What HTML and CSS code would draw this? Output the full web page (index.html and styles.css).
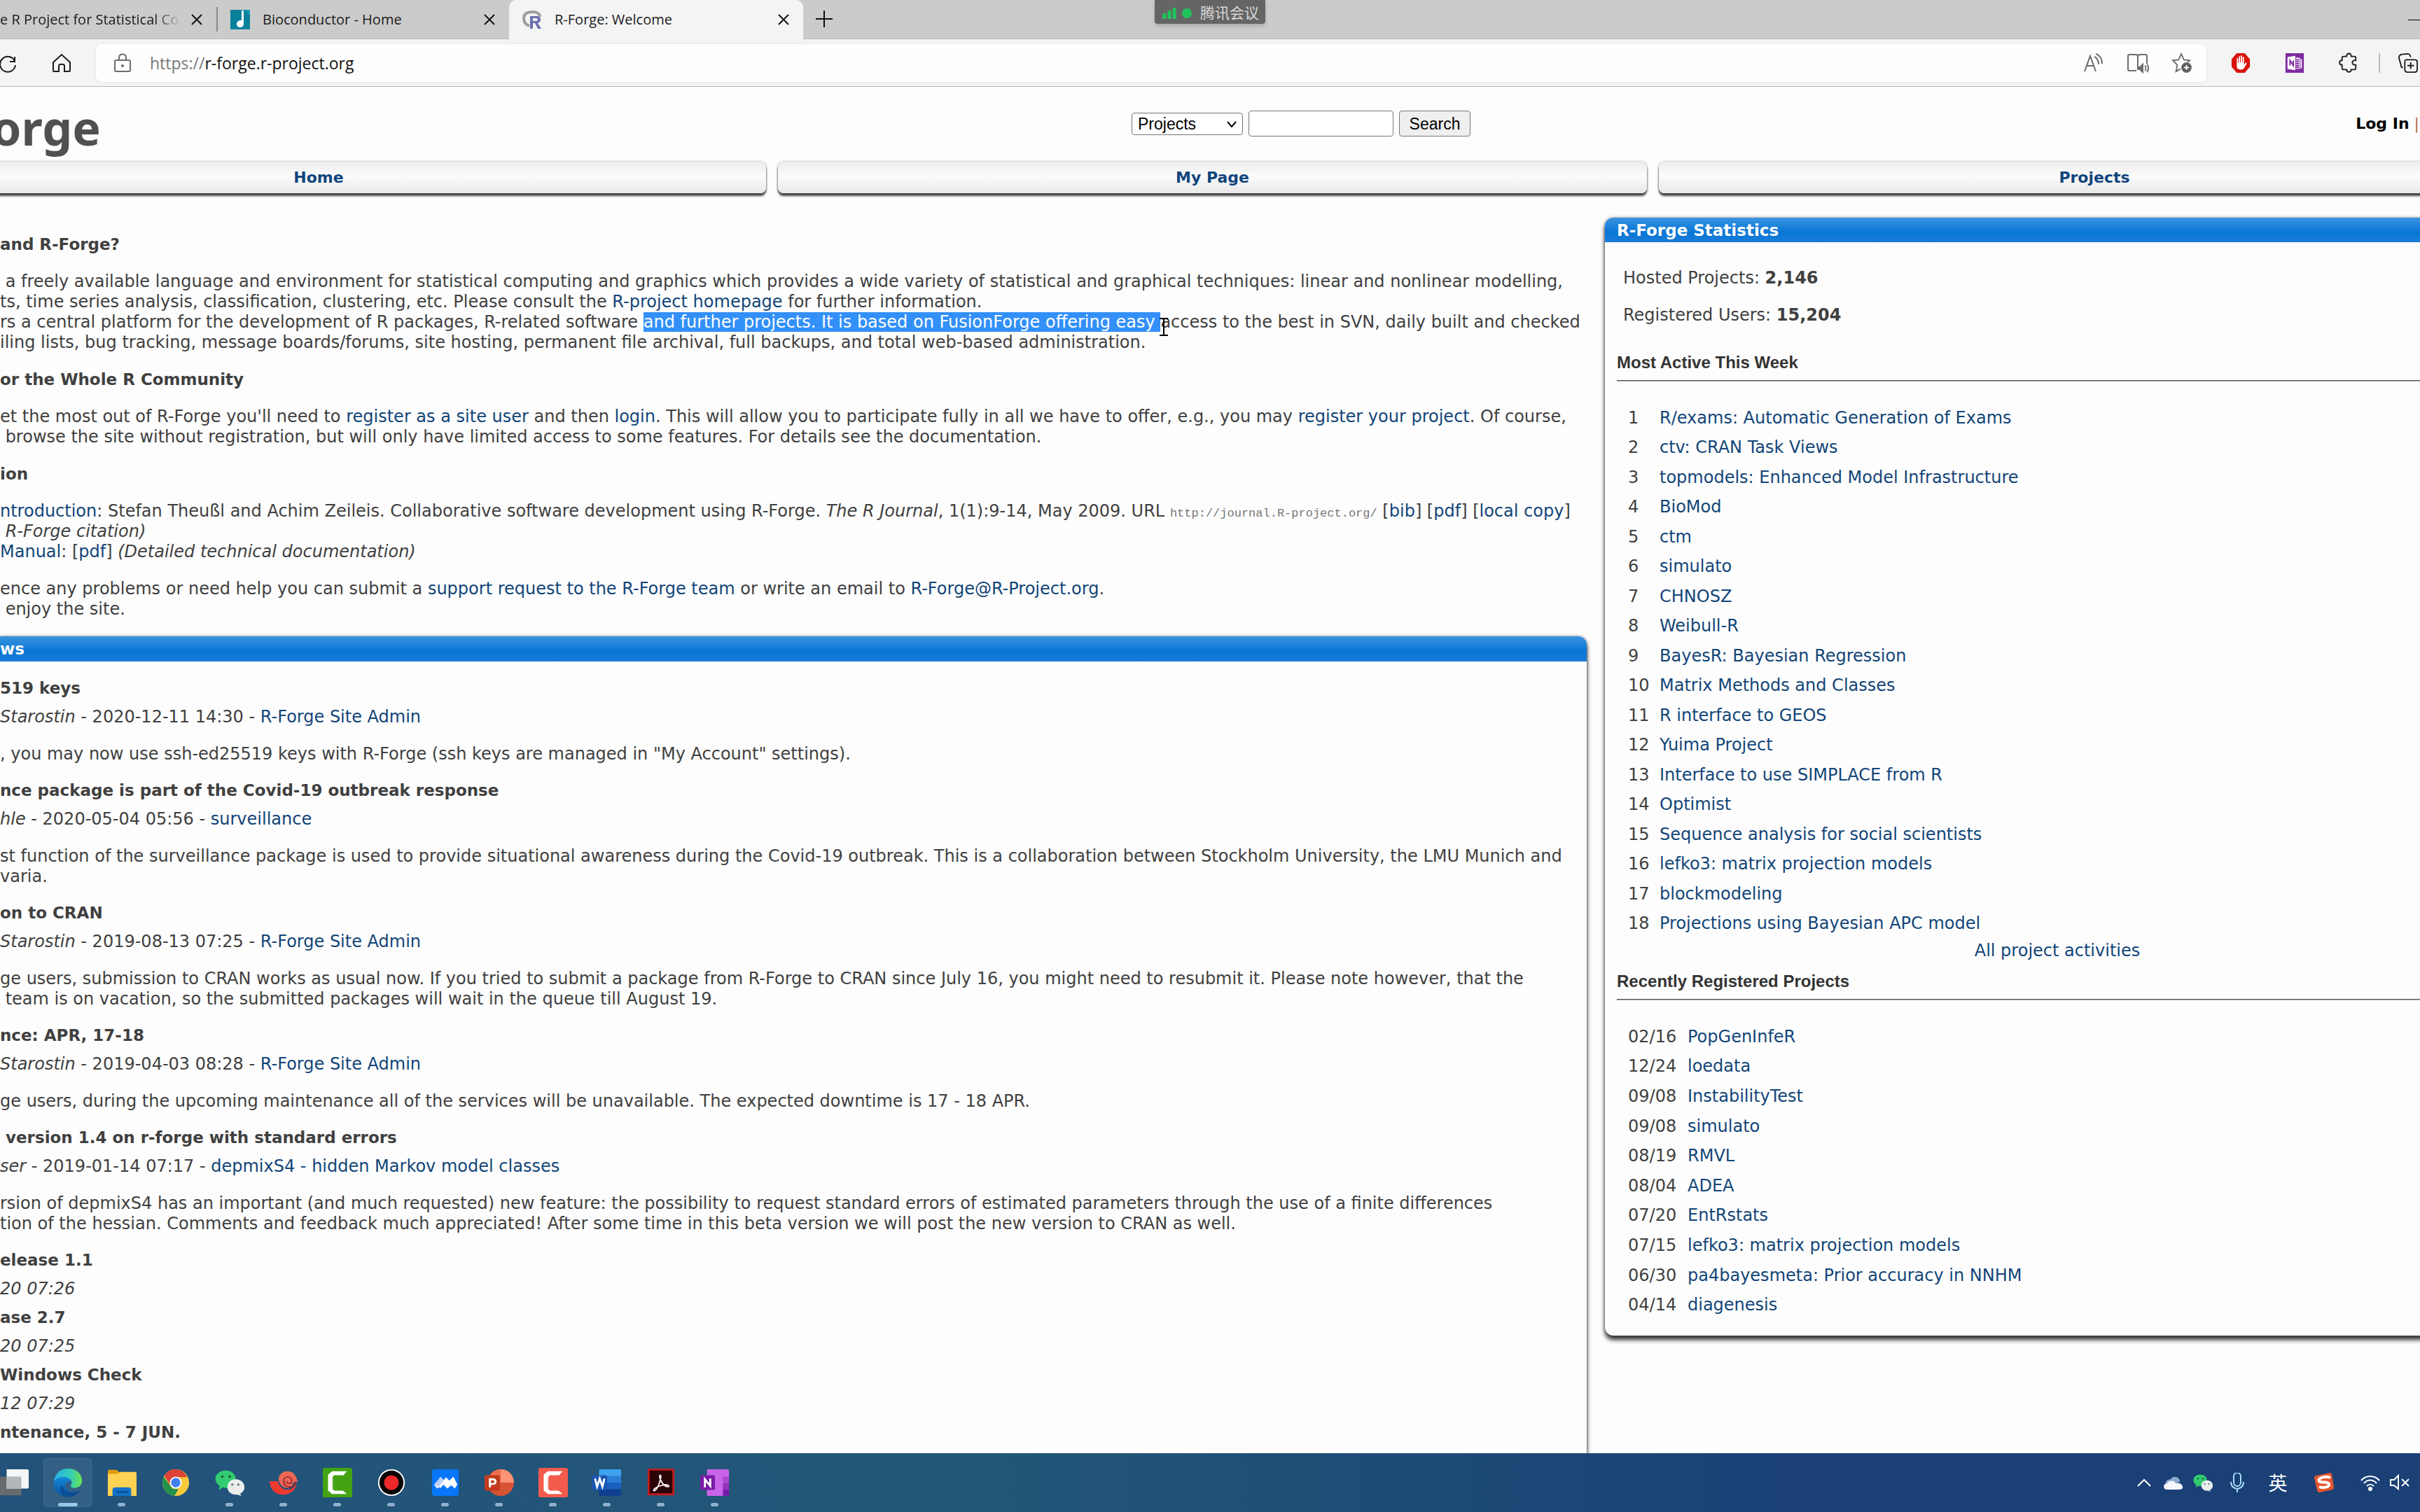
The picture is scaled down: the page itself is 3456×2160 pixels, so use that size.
FILE: index.html
```html
<!DOCTYPE html>
<html lang="en">
<head>
<meta charset="utf-8">
<title>R-Forge: Welcome</title>
<link rel="stylesheet" href="styles.css">
</head>
<body>
<header class="browser">
  <div class="tabs">
    <div class="tab tab-first">
      <span class="tab-title fade">e R Project for Statistical Co</span>
      <button class="close" aria-label="Close tab"><svg viewBox="0 0 16 16"><path d="M1 1l14 14M15 1L1 15"/></svg></button>
    </div>
    <div class="tab tab-second">
      <svg class="favicon" viewBox="0 0 28 28"><path fill="#0a819b" d="M0 0h28v28H0z"/><path fill="#0e97ae" d="M20 0h8v8z"/><path fill="#fff" d="M16 1h3v19c0 3-2 5-5 5s-5-2-5-5 3-5 7-5z"/></svg>
      <span class="tab-title">Bioconductor - Home</span>
      <button class="close" aria-label="Close tab"><svg viewBox="0 0 16 16"><path d="M1 1l14 14M15 1L1 15"/></svg></button>
    </div>
    <div class="tab tab-active">
      <svg class="favicon" viewBox="0 0 28 28"><path fill="none" stroke="#9b9da0" stroke-width="4" d="M10 23C4 21 2 16 2 12 2 6 7 3 14 3s11 3 11 7"/><path fill="#6d6fae" fill-rule="evenodd" d="M11 9h9c4 0 6 2 6 5 0 2-1 4-4 5l5 8h-5l-4-8h-3v8h-4zm4 3v4h4c4 0 4-4 0-4z"/></svg>
      <span class="tab-title">R-Forge: Welcome</span>
      <button class="close" aria-label="Close tab"><svg viewBox="0 0 16 16"><path d="M1 1l14 14M15 1L1 15"/></svg></button>
    </div>
    <button class="new-tab" aria-label="New tab"><svg viewBox="0 0 24 24"><path d="M12 0v24M0 12h24"/></svg></button>
    <button class="minimise" aria-label="Minimize"></button>
  </div>
  <div class="toolbar">
    <button class="tool refresh" aria-label="Refresh"><svg viewBox="0 0 28 28"><path d="M24 5v7h-7M24 11a11 11 0 1 0 1 6"/></svg></button>
    <button class="tool home" aria-label="Home page"><svg viewBox="0 0 28 28"><path d="M2 13L14 2l12 11v12c0 1-1 1-1 1h-7v-8c0-3-8-3-8 0v8H3c-1 0-1-1-1-1z"/></svg></button>
    <div class="address">
      <svg class="lock" viewBox="0 0 28 28"><path d="M5 10h18c2 0 2 1 2 2v12c0 2-1 2-2 2H5c-2 0-2-1-2-2V12c0-1 0-2 2-2zM9 10V6c0-6 10-6 10 0v4"/><circle cx="14" cy="18" r="1"/></svg>
      <span class="url"><span class="scheme">https://</span>r-forge.r-project.org</span>
      <button class="tool soft" aria-label="Read aloud"><svg viewBox="0 0 28 28"><path d="M1 26L9 4l8 22M4 18h10M15 5c3 1 6 5 6 11M17 1c6 2 9 7 9 14"/></svg></button>
      <button class="tool soft" aria-label="Immersive reader"><svg viewBox="0 0 28 28"><path d="M14 20V5c0-2-1-3-3-3H2C1 2 0 2 0 4v19c0 2 1 2 2 2h10M14 5c0-2 1-3 3-3h8c2 0 2 1 2 2v11M24 18c2 2 2 5 0 7M27 16c3 3 3 8 0 11"/><path fill="#6c6c6c" d="M14 20h3l4-4v11l-4-4h-3z"/></svg></button>
      <button class="tool soft" aria-label="Add to favorites"><svg viewBox="0 0 30 30"><path d="M13 24l-7 4 2-10-7-7 9-1 4-9 4 9 9 1-3 3"/><circle cx="22" cy="22" r="7" fill="#555"/><path stroke="#fff" d="M22 18v8M18 22h8"/></svg></button>
    </div>
    <button class="tool" aria-label="Ad blocker"><svg class="flat" viewBox="0 0 28 30"><path fill="#d8140c" d="M8 0h12l8 9v12l-8 9H8l-8-9V9z"/><path fill="#fff" d="M8 9c0-2 2-2 2 0v6h1V6c0-2 2-2 2 0v8h1V5c0-2 2-2 2 0v9h1V7c0-2 2-2 2 0v11l2-3c2-1 2 0 2 1l-4 7c-2 3-9 3-11-1z"/></svg></button>
    <button class="tool" aria-label="OneNote clipper"><svg class="flat" viewBox="0 0 28 30"><path fill="#7d2aa0" d="M0 0h28v30H0z"/><path fill="#fff" d="M3 6l12-2v22L3 24zM16 7h6v17h-6z"/><path stroke="#7d2aa0" fill="none" d="M16 10h5M16 13h5M16 16h5M16 19h5M16 22h5"/><path stroke="#fff" stroke-width="2" d="M24 9v14"/><path fill="none" stroke="#7d2aa0" stroke-width="2" d="M7 19v-8l5 8v-8"/></svg></button>
    <button class="tool" aria-label="Extensions"><svg viewBox="0 0 28 30"><path d="M7 5h4c0-6 7-6 7 0h5c2 0 2 1 2 2v4c-7-1-7 7 0 7v5c0 2-1 2-2 2h-5c0 5-7 5-7 0H7c-2 0-3-1-3-2v-5c-5 0-5-7 0-7V7c0-1 1-2 3-2z"/></svg></button>
    <span class="divider"></span>
    <button class="tool" aria-label="Collections"><svg viewBox="0 0 30 30"><path d="M11 10h14c3 0 4 1 4 3v12c0 2-1 4-4 4H14c-3 0-4-2-4-4V13c0-2 0-3 3-3M19 14v10M14 19h10M7 22c-2 0-3-2-3-4L1 7c0-3 1-4 3-5l10-1c3 0 4 1 5 5"/></svg></button>
  </div>
</header>

<main class="page">
  <div class="masthead">
    <div class="logo">orge</div>
    <form class="search">
      <span class="picker">
        <select aria-label="Search in"><option>Projects</option></select>
        <svg viewBox="0 0 14 10"><path d="M1 1l6 7 6-7"/></svg>
      </span>
      <input type="text" aria-label="Search words">
      <button type="button">Search</button>
    </form>
    <div class="account"><a href="#">Log In</a> <span>|</span></div>
  </div>
  <nav class="nav">
    <a href="#">Home</a>
    <a href="#">My Page</a>
    <a href="#">Projects</a>
  </nav>
  <div class="columns">
    <div class="content">
      <section class="intro">
        <h3>and R-Forge?</h3>
        <p>&nbsp;a freely available language and environment for statistical computing and graphics which provides a wide variety of statistical and graphical techniques: linear and nonlinear modelling,<br>ts, time series analysis, classification, clustering, etc. Please consult the <a href="#">R-project homepage</a> for further information.<br>rs a central platform for the development of R packages, R-related software <mark>and further projects. It is based on FusionForge offering easy <svg class="caret" viewBox="0 0 14 26"><path d="M1 1h5l1 1 1-1h5M7 1v24M1 25h12"/></svg></mark>access to the best in SVN, daily built and checked<br>iling lists, bug tracking, message boards/forums, site hosting, permanent file archival, full backups, and total web-based administration.</p>
        <h3>or the Whole R Community</h3>
        <p>et the most out of R-Forge you'll need to <a href="#">register as a site user</a> and then <a href="#">login</a>. This will allow you to participate fully in all we have to offer, e.g., you may <a href="#">register your project</a>. Of course,<br>&nbsp;browse the site without registration, but will only have limited access to some features. For details see the documentation.</p>
        <h3>ion</h3>
        <p><a href="#">ntroduction</a>: Stefan Theußl and Achim Zeileis. Collaborative software development using R-Forge. <i>The R Journal</i>, 1(1):9-14, May 2009. URL <code>http://journal.R-project.org/</code> [<a href="#">bib</a>] [<a href="#">pdf</a>] [<a href="#">local copy</a>]<br><i>&nbsp;R-Forge citation)</i><br><a href="#">Manual</a>: [<a href="#">pdf</a>] <i>(Detailed technical documentation)</i></p>
        <p>ence any problems or need help you can submit a <a href="#">support request to the R-Forge team</a> or write an email to <a href="#">R-Forge@R-Project.org</a>.<br>&nbsp;enjoy the site.</p>
      </section>
      <section class="panel news">
        <h2>ws</h2>
        <article>
          <h3>519 keys</h3>
          <div class="meta"><i>Starostin</i> - 2020-12-11 14:30 - <a href="#">R-Forge Site Admin</a></div>
          <p>, you may now use ssh-ed25519 keys with R-Forge (ssh keys are managed in "My Account" settings).</p>
        </article>
        <article>
          <h3>nce package is part of the Covid-19 outbreak response</h3>
          <div class="meta"><i>hle</i> - 2020-05-04 05:56 - <a href="#">surveillance</a></div>
          <p>st function of the surveillance package is used to provide situational awareness during the Covid-19 outbreak. This is a collaboration between Stockholm University, the LMU Munich and<br>varia.</p>
        </article>
        <article>
          <h3>on to CRAN</h3>
          <div class="meta"><i>Starostin</i> - 2019-08-13 07:25 - <a href="#">R-Forge Site Admin</a></div>
          <p>ge users, submission to CRAN works as usual now. If you tried to submit a package from R-Forge to CRAN since July 16, you might need to resubmit it. Please note however, that the<br>&nbsp;team is on vacation, so the submitted packages will wait in the queue till August 19.</p>
        </article>
        <article>
          <h3>nce: APR, 17-18</h3>
          <div class="meta"><i>Starostin</i> - 2019-04-03 08:28 - <a href="#">R-Forge Site Admin</a></div>
          <p>ge users, during the upcoming maintenance all of the services will be unavailable. The expected downtime is 17 - 18 APR.</p>
        </article>
        <article>
          <h3>&nbsp;version 1.4 on r-forge with standard errors</h3>
          <div class="meta"><i>ser</i> - 2019-01-14 07:17 - <a href="#">depmixS4 - hidden Markov model classes</a></div>
          <p>rsion of depmixS4 has an important (and much requested) new feature: the possibility to request standard errors of estimated parameters through the use of a finite differences<br>tion of the hessian. Comments and feedback much appreciated! After some time in this beta version we will post the new version to CRAN as well.</p>
        </article>
        <article>
          <h3>elease 1.1</h3>
          <div class="meta"><i>20 07:26</i></div>
        </article>
        <article>
          <h3>ase 2.7</h3>
          <div class="meta"><i>20 07:25</i></div>
        </article>
        <article>
          <h3>Windows Check</h3>
          <div class="meta"><i>12 07:29</i></div>
        </article>
        <article>
          <h3>ntenance, 5 - 7 JUN.</h3>
        </article>
      </section>
    </div>
    <aside class="panel stats">
      <h2>R-Forge Statistics</h2>
      <p>Hosted Projects: <b>2,146</b></p>
      <p>Registered Users: <b>15,204</b></p>
      <h4>Most Active This Week</h4>
      <hr>
      <table class="active">
        <tr><td>1</td><td><a href="#">R/exams: Automatic Generation of Exams</a></td></tr>
        <tr><td>2</td><td><a href="#">ctv: CRAN Task Views</a></td></tr>
        <tr><td>3</td><td><a href="#">topmodels: Enhanced Model Infrastructure</a></td></tr>
        <tr><td>4</td><td><a href="#">BioMod</a></td></tr>
        <tr><td>5</td><td><a href="#">ctm</a></td></tr>
        <tr><td>6</td><td><a href="#">simulato</a></td></tr>
        <tr><td>7</td><td><a href="#">CHNOSZ</a></td></tr>
        <tr><td>8</td><td><a href="#">Weibull-R</a></td></tr>
        <tr><td>9</td><td><a href="#">BayesR: Bayesian Regression</a></td></tr>
        <tr><td>10</td><td><a href="#">Matrix Methods and Classes</a></td></tr>
        <tr><td>11</td><td><a href="#">R interface to GEOS</a></td></tr>
        <tr><td>12</td><td><a href="#">Yuima Project</a></td></tr>
        <tr><td>13</td><td><a href="#">Interface to use SIMPLACE from R</a></td></tr>
        <tr><td>14</td><td><a href="#">Optimist</a></td></tr>
        <tr><td>15</td><td><a href="#">Sequence analysis for social scientists</a></td></tr>
        <tr><td>16</td><td><a href="#">lefko3: matrix projection models</a></td></tr>
        <tr><td>17</td><td><a href="#">blockmodeling</a></td></tr>
        <tr><td>18</td><td><a href="#">Projections using Bayesian APC model</a></td></tr>
      </table>
      <div class="all"><a href="#">All project activities</a></div>
      <h4>Recently Registered Projects</h4>
      <hr>
      <table class="recent">
        <tr><td>02/16</td><td><a href="#">PopGenInfeR</a></td></tr>
        <tr><td>12/24</td><td><a href="#">loedata</a></td></tr>
        <tr><td>09/08</td><td><a href="#">InstabilityTest</a></td></tr>
        <tr><td>09/08</td><td><a href="#">simulato</a></td></tr>
        <tr><td>08/19</td><td><a href="#">RMVL</a></td></tr>
        <tr><td>08/04</td><td><a href="#">ADEA</a></td></tr>
        <tr><td>07/20</td><td><a href="#">EntRstats</a></td></tr>
        <tr><td>07/15</td><td><a href="#">lefko3: matrix projection models</a></td></tr>
        <tr><td>06/30</td><td><a href="#">pa4bayesmeta: Prior accuracy in NNHM</a></td></tr>
        <tr><td>04/14</td><td><a href="#">diagenesis</a></td></tr>
      </table>
    </aside>
  </div>
</main>

<footer class="taskbar">
  <div class="apps">
    <button class="app" aria-label="Task view"><svg viewBox="0 0 44 44"><path fill="#666a6c" d="M0 13h33v28H0z"/><path fill="#f4f5f6" d="M11 2h31c1 0 2 1 2 2v25c0 1-1 2-2 2H11z"/><path fill="#b4b7b9" d="M11 13h22v18H11z"/></svg></button>
    <button class="app current open" aria-label="Edge"><svg viewBox="0 0 44 44"><defs><linearGradient id="sea"><stop stop-color="#25b0ea"/><stop offset=".6" stop-color="#35cdb4"/><stop offset="1" stop-color="#6ce44f"/></linearGradient><linearGradient id="deep" x2="0" y2="1"><stop stop-color="#128ad6"/><stop offset="1" stop-color="#0c4fa0"/></linearGradient></defs><path fill="url(#sea)" d="M1 20C3 8 11 1 22 1c13 0 21 8 21 18 0 7-5 11-12 11-4 0-6-2-4-5C31 16 19 10 1 20z"/><path fill="url(#deep)" d="M1 21c5-10 24-10 26 0-6-2-11 3-8 9 4 7 12 8 21 4-9 12-27 12-35 1C1 31 0 26 1 21z"/><path fill="#0b4d96" d="M14 26c0 10 10 14 26 8-6 9-17 11-23 8-7-4-8-13-3-16z"/></svg></button>
    <button class="app open" aria-label="File Explorer"><svg viewBox="0 0 44 44"><path fill="#dc9a0c" d="M1 5c0-2 1-2 2-2h11l5 4v4H1z"/><path fill="#ffd253" d="M1 9h14l5-3h22c1 0 2 1 2 2v34H1z"/><path fill="#1272c8" d="M8 42V33c0-3 2-4 4-4h20c3 0 4 2 4 4v9z"/><path stroke="#073e83" stroke-width="2" d="M14 36h17"/></svg></button>
    <button class="app" aria-label="Chrome"><svg viewBox="0 0 44 44"><circle cx="22" cy="22" r="20" fill="#f8c93c"/><path fill="#dc4238" d="M5 12C13-2 33-1 39 14H22l-8 12z"/><path fill="#24924c" d="M4 13l13 18 9 1-6 10C4 40-1 24 4 13z"/><circle cx="22" cy="22" r="9" fill="#fff"/><circle cx="22" cy="22" r="7" fill="#4080ef"/></svg></button>
    <button class="app open" aria-label="WeChat"><svg viewBox="0 0 44 44"><path fill="#31cc70" d="M16 4c20 0 20 26 0 26l-4-1-6 4 1-6C-5 19 1 4 16 4z"/><path fill="#eceeee" d="M31 17c15 0 17 18 7 21l1 4-5-2c-20 2-20-23-3-23z"/><g fill="#275d3e"><circle cx="11" cy="13" r="2"/><circle cx="22" cy="13" r="2"/></g><g fill="#788"><circle cx="26" cy="25" r="2"/><circle cx="35" cy="25" r="2"/></g></svg></button>
    <button class="app open" aria-label="Snail"><svg viewBox="0 0 44 44"><path fill="#ee3a31" d="M1 20h12c3 10 11 15 19 12 6-2 8-6 9-10 1 8-6 17-18 18C11 41 2 34 1 20z"/><path fill="#ec6955" d="M15 20C13 11 20 5 28 5c8 0 13 6 15 16l-7 1C34 34 19 32 15 20z"/><path fill="none" stroke="#9b2430" stroke-width="2" d="M40 20c-1 12-18 11-18 0 0-9 12-8 12-1 0 6-8 5-7 1"/></svg></button>
    <button class="app open" aria-label="Camtasia"><svg viewBox="0 0 44 44"><rect width="44" height="44" rx="3" fill="#43a313"/><path fill="#dfe6d8" d="M8 10l7 4v18l-7 3z"/><path fill="#fff" d="M8 10l6-5h22l-5 6H17l-4 4v15l4 4h13l6 5H14l-6-5z"/></svg></button>
    <button class="app open" aria-label="Recorder"><svg viewBox="0 0 44 44"><circle cx="22" cy="22" r="20" fill="#fff"/><circle cx="22" cy="22" r="18" fill="#080404"/><circle cx="22" cy="22" r="11" fill="#ed2828"/></svg></button>
    <button class="app open" aria-label="Tencent Meeting"><svg viewBox="0 0 44 44"><rect x="2" y="2" width="40" height="40" rx="4" fill="#0776f8"/><path fill="#bccdf8" d="M5 25l10-12 8 9-13 9z"/><path fill="#fff" d="M5 25l5 6 13-17 5 5 6-6 6 12-4 6-5-5-6 5-6-6-4 5z"/></svg></button>
    <button class="app open" aria-label="PowerPoint"><svg viewBox="0 0 44 44"><circle cx="24" cy="22" r="20" fill="#d65334"/><path fill="#ff9375" d="M24 2a20 20 0 0 1 20 20H24z"/><path fill="#ed6f4d" d="M24 2v20H6C6 10 14 2 24 2z"/><rect y="11" width="23" height="23" rx="2" fill="#c33b1e"/><path fill="none" stroke="#fff" stroke-width="3" d="M8 29V17h4c6 0 6 7 0 7H8"/></svg></button>
    <button class="app open" aria-label="Camtasia Recorder"><svg viewBox="0 0 44 44"><rect width="44" height="44" rx="3" fill="#f35b4c"/><path fill="#f8d3ce" d="M8 10l7 4v18l-7 3z"/><path fill="#fff" d="M8 10l6-5h22l-5 6H17l-4 4v15l4 4h13l6 5H14l-6-5z"/></svg></button>
    <button class="app open" aria-label="Word"><svg viewBox="0 0 44 44"><path fill="#40a3ed" d="M10 4c0-2 1-2 2-2h29c2 0 2 1 2 2v9H10z"/><path fill="#2b7ed5" d="M10 12h33v10H10z"/><path fill="#1960be" d="M10 22h33v10H10z"/><path fill="#103f92" d="M10 32h33v8c0 2-1 2-2 2H12c-1 0-2 0-2-2z"/><rect y="11" width="22" height="22" rx="2" fill="#1a55b5"/><path fill="none" stroke="#fff" stroke-width="3" d="M4 16l3 12 4-12 4 12 3-12"/></svg></button>
    <button class="app open" aria-label="Acrobat"><svg viewBox="0 0 44 44"><rect x="2" y="1" width="40" height="40" rx="2" fill="#c11c1a"/><path fill="#2b0406" d="M5 4h34v34H5z"/><path fill="none" stroke="#f4eaea" stroke-width="2" d="M21 11c-4 0 3 16 10 17 6 1 2-5-8-2-8 2-15 8-11 8 5 0 12-23 9-23z"/></svg></button>
    <button class="app open" aria-label="OneNote"><svg viewBox="0 0 44 44"><path fill="#c964e8" d="M10 4c0-2 1-2 2-2h29c2 0 2 1 2 2v38H12c-1 0-2-1-2-2z"/><path fill="#aa47cf" d="M34 13h9v10h-9z"/><path fill="#9433b5" d="M34 23h9v9h-9z"/><path fill="#7719aa" d="M34 32h9v10h-9z"/><rect y="11" width="22" height="22" rx="2" fill="#7a1ba8"/><path fill="none" stroke="#fff" stroke-width="3" d="M7 29V17l8 10V16"/></svg></button>
  </div>
  <div class="tray">
    <button class="tray-item" aria-label="Hidden icons"><svg viewBox="0 0 28 28"><path d="M5 19l9-9 9 9"/></svg></button>
    <button class="tray-item" aria-label="OneDrive"><svg class="flat" viewBox="0 0 28 28"><path fill="#8fa9cf" d="M5 18C-1 13 8 8 9 10c5-8 15-3 14 3z"/><path fill="#f5f7fb" d="M5 24c-7 0-6-9 0-9 5-6 11-3 12 0 8-3 15 8 6 9z"/></svg></button>
    <button class="tray-item" aria-label="WeChat"><svg class="flat" viewBox="0 0 44 44"><path fill="#31cc70" d="M16 4c20 0 20 26 0 26l-4-1-6 4 1-6C-5 19 1 4 16 4z"/><path fill="#eceeee" d="M31 17c15 0 17 18 7 21l1 4-5-2c-20 2-20-23-3-23z"/><g fill="#275d3e"><circle cx="11" cy="13" r="2"/><circle cx="22" cy="13" r="2"/></g><g fill="#788"><circle cx="26" cy="25" r="2"/><circle cx="35" cy="25" r="2"/></g></svg></button>
    <button class="tray-item mic" aria-label="Microphone"><svg viewBox="0 0 28 28"><rect x="9" y="0" width="10" height="19" rx="5"/><path d="M5 13c0 13 18 13 18 0M14 23v5"/></svg></button>
    <button class="tray-item ime">英</button>
    <button class="tray-item sogou" aria-label="Sogou input"><svg class="flat" viewBox="0 0 28 28"><path fill="#e4562f" d="M3 4l19-4c2 0 2 1 3 2l3 18c0 2 0 3-2 4L8 28c-3 0-3-1-4-3L0 7c0-2 1-3 3-3z"/><path fill="none" stroke="#fff" stroke-width="4" d="M23 7C15 4 4 8 7 12c3 3 13 0 14 4 1 5-9 6-14 4"/></svg></button>
    <button class="tray-item" aria-label="Wi-Fi"><svg viewBox="0 0 28 28"><path d="M1 11c7-8 19-8 26 0M5 15c5-6 13-6 18 0M9 19c3-3 7-3 10 0"/><circle cx="14" cy="23" r="2" fill="#fff"/></svg></button>
    <button class="tray-item" aria-label="Volume muted"><svg viewBox="0 0 28 28"><path d="M1 10h5l6-6v19l-6-5H1zM17 9l10 10M27 9L17 19"/></svg></button>
  </div>
</footer>
<div class="meeting">
  <svg viewBox="0 0 44 28"><path stroke="#20c45c" stroke-width="5" d="M4 24v-8M11 24V12M18 24V8"/><circle cx="36" cy="16" r="7" fill="#20c45c"/></svg>
  <span>腾讯会议</span>
</div>
</body>
</html>
```
FILE: styles.css
```css
* { box-sizing: border-box; }

body {
  margin: 0;
  height: 100vh;
  display: flex;
  flex-direction: column;
  overflow: hidden;
  background: #fdfdfd;
  color: #404040;
  font: 24px/29px Verdana, "DejaVu Sans", sans-serif;
}

a { color: #124578; text-decoration: none; }
button { font: inherit; border: 0; padding: 0; background: none; }
svg { display: block; }

/* Browser frame */
.browser { font: 20px/30px "Segoe UI", "Open Sans", sans-serif; color: #1b1b1b; }

.tabs { display: flex; height: 56px; background: #cbcbcb; border-bottom: 1px solid #bbb; }
.tab { display: flex; align-items: center; padding-right: 20px; }
.tab-title { flex: 1; white-space: nowrap; }
.tab-first { width: 309px; }
.tab-first .close { margin-left: 14px; }
.tab-second { width: 418px; padding-left: 18px; border-left: 2px solid #8a8a8a; border-image: linear-gradient(transparent 20%, #888 20% 80%, transparent 80%) 1; }
.tab-active { width: 420px; height: 56px; padding-left: 19px; background: #f4f4f4; border-radius: 10px 10px 0 0; }
.fade { -webkit-mask-image: linear-gradient(90deg, #000 85%, transparent); mask-image: linear-gradient(90deg, #000 85%, transparent); }
.favicon { width: 28px; height: 28px; margin-right: 18px; }
.close { width: 16px; height: 16px; }
.close svg, .new-tab svg { width: 100%; height: 100%; fill: none; stroke: #111; stroke-width: 2; }
.new-tab { width: 24px; height: 24px; margin: 15px 18px; }
.minimise { width: 17px; height: 1px; margin: 28px 0 0 auto; background: #000; }

.toolbar { display: flex; align-items: center; height: 68px; background: #f4f4f4; border-bottom: 1px solid #b8b8b8; }
.tool { flex: none; width: 28px; height: 28px; margin-right: 49px; }
.tool svg, .lock { width: 100%; height: 100%; fill: none; stroke: #1b1b1b; stroke-width: 2; overflow: visible; }
.tool .flat { stroke: none; }
.refresh { margin-left: -3px; }
.home { margin-right: 35px; }
.address { flex: 1; display: flex; align-items: center; height: 54px; margin-right: 35px; padding: 0 21px 0 24px; background: #fefefe; border-radius: 8px; box-shadow: 0 0 3px #ddd; }
.address .lock { width: 28px; height: 28px; margin-right: 25px; stroke: #6c6c6c; }
.url { flex: 1; font-size: 23px; color: #111; }
.scheme { color: #777; }
.soft { margin-right: 35px; }
.soft:last-child { margin-right: 0; }
.soft svg { stroke: #6c6c6c; }
.divider { width: 2px; height: 28px; margin: 0 26px 0 -20px; background: #bbb; }
.divider + .tool { margin-right: 3px; }

.meeting { position: absolute; left: 1649px; top: 0; display: flex; align-items: center; gap: 17px; width: 158px; height: 34px; padding-left: 10px; border-radius: 0 0 4px 4px; background: #656565; color: #d8d8d8; font: 21px/34px "Noto Sans CJK SC", sans-serif; box-shadow: 0 3px 5px #aaa; white-space: nowrap; }
.meeting svg { width: 44px; height: 28px; margin-right: -6px; }

/* Site header */
.page { flex: 1; min-height: 0; overflow: hidden; }
.masthead { display: grid; grid-template-columns: 1616px 1fr auto; height: 107px; }
.logo { margin: 16px 0 0 -12px; font: bold 68px/84px "Noto Sans", sans-serif; color: #505050; }
.search { display: flex; align-items: center; gap: 8px; height: 37px; margin-top: 34px; }
.search select, .search input, .search button { height: 37px; border: 1px solid #767676; border-radius: 4px; background: #fff; color: #000; font: 23px/32px "Liberation Sans", Arial, sans-serif; }
.picker { position: relative; }
.picker svg { position: absolute; right: 9px; top: 12px; width: 14px; height: 10px; fill: none; stroke: #000; stroke-width: 2; }
.search select { display: block; width: 159px; height: 32px; padding: 0 8px; line-height: 28px; appearance: none; }
.search input { width: 207px; }
.search button { width: 102px; background: #efefef; }
.account { padding: 38px 1px 0 0; font-size: 22px; color: #b06a45; }
.account a { color: #000; font-weight: bold; }

.nav { display: grid; grid-template-columns: 1278fr 1241fr 1244fr; gap: 17px; margin: 0 -157px 0 -184px; }
.nav a { padding: 8px 0; border-radius: 8px; text-align: center; font-size: 22px; font-weight: bold; color: #10457c; background: linear-gradient(#ececec, #fbfbfb 45%, #e8e8e8); box-shadow: 0 4px 3px #444, 0 0 3px #999; }

.columns { display: grid; grid-template-columns: minmax(0, 1fr) 1292px; gap: 26px; align-items: start; margin: 35px -128px 0 0; }

h3 { margin: 0; font-size: 23px; line-height: 29px; white-space: nowrap; }
p { margin: 0; white-space: nowrap; }
.intro { padding: 24px 0 24px; }
.intro h3, .intro p { margin-bottom: 24px; }
.intro p:last-child { margin-bottom: 0; }
mark { position: relative; background: #3390f8; color: #fff; white-space: pre; }
.caret { position: absolute; right: -12px; top: 8px; width: 14px; height: 26px; fill: none; stroke: #000; stroke-width: 2; }
code { font: 17px/20px "Liberation Mono", monospace; color: #777; }

.panel { border-radius: 12px; background: #fdfdfd; box-shadow: 0 6px 6px #333, 0 0 4px #888; }
.panel h2 { margin: 0; height: 35px; padding: 4px 17px 0; border-radius: 12px 12px 0 0; background: linear-gradient(#3a93df, #0876d6 60%, #1a7cd8); color: #fff; font-size: 23px; line-height: 29px; }
.news { padding-bottom: 60px; border-top-left-radius: 0; }
.news h2 { height: 36px; padding-left: 0; border-top-left-radius: 0; margin-bottom: 24px; }
.news h3 { margin-bottom: 12px; }
.meta { margin-bottom: 12px; white-space: nowrap; }
.news p { padding-top: 12px; margin-bottom: 23px; }

.stats { padding-bottom: 22px; }
.stats h2 { margin-bottom: 37px; }
.stats p { margin: 0 26px 24px; }
.stats h4 { margin: 0 17px; font: bold 24px/29px "Liberation Sans", Arial, sans-serif; color: #333; }
.stats p + h4 { margin-top: 38px; }
.stats hr { margin: 11px 17px 31px; border: 1px inset #aaa; }
.stats table { margin-left: 33px; border-spacing: 0; }
.stats td { padding: 0; }
.active { height: 765px; }
.active td:first-child { width: 45px; }
.recent { height: 426px; }
.recent td:first-child { width: 85px; }
.all { margin-top: 3px; margin-bottom: 14px; text-align: center; }

/* Taskbar */
.taskbar { display: flex; justify-content: space-between; height: 84px; background: linear-gradient(90deg, #23527b, #225777 40%, #1a4076 75%); }
.apps { display: flex; margin-left: -19px; }
.app { display: flex; flex-direction: column; align-items: center; gap: 7px; width: 77px; padding-top: 20px; }
.app svg { width: 42px; height: 44px; }
.app.open::after { content: ""; width: 11px; height: 5px; border-radius: 3px; background: #91b0ca; }
.app.current { width: 69px; height: 70px; margin: 7px 4px 0; padding-top: 13px; border-radius: 6px; background: #ffffff14; box-shadow: inset 0 0 0 1px #ffffff14; }
.app.current::after { width: 28px; background: #9cc8e8; }
.tray { display: flex; align-items: center; gap: 14px; padding-right: 15px; }
.tray-item { width: 28px; height: 28px; }
.tray-item svg { width: 28px; height: 28px; fill: none; stroke: #fff; stroke-width: 2; }
.tray-item .flat { stroke: none; }
.mic { margin-left: 7px; }
.mic svg { stroke: #a9dcfa; }
.ime { margin: 0 24px 0 16px; font: 27px/28px "Noto Sans CJK SC", sans-serif; color: #fff; }
.sogou { margin-right: 24px; }
```
